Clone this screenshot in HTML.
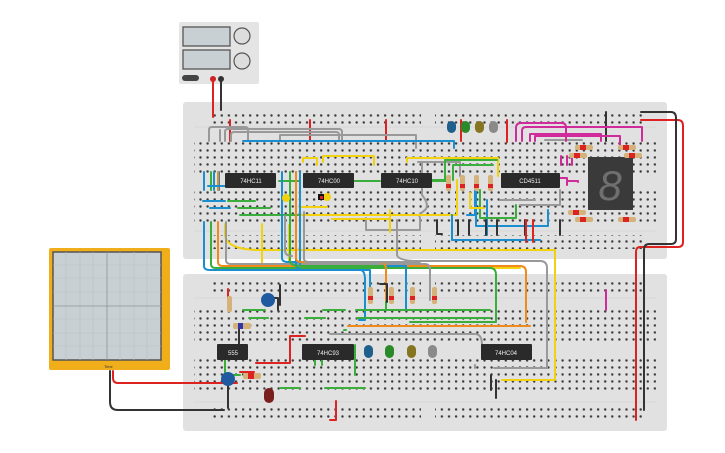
<!DOCTYPE html>
<html><head><meta charset="utf-8"><style>
html,body{margin:0;padding:0;background:#fff;width:725px;height:453px;overflow:hidden}
svg{display:block}
text{font-family:"Liberation Sans",sans-serif}
</style></head><body>
<svg width="725" height="453" viewBox="0 0 725 453" xmlns="http://www.w3.org/2000/svg">
<defs>
<pattern id="d" x="197" y="0" width="7.1" height="7" patternUnits="userSpaceOnUse"><circle cx="3.5" cy="3.5" r="1.2" fill="#3a3a3a"/></pattern>
</defs>
<rect x="179" y="22" width="80" height="62" rx="2" fill="#e4e4e4"/>
<rect x="183" y="27" width="47" height="19" fill="#c9d0d3" stroke="#555" stroke-width="1.3"/>
<rect x="183" y="50" width="47" height="19" fill="#c9d0d3" stroke="#555" stroke-width="1.3"/>
<circle cx="242" cy="36" r="8" fill="#ddd" stroke="#555" stroke-width="1.2"/>
<circle cx="242" cy="61" r="8" fill="#ddd" stroke="#555" stroke-width="1.2"/>
<rect x="182" y="75" width="17" height="6" rx="3" fill="#444"/>
<circle cx="213" cy="79" r="3" fill="#c22"/><circle cx="221" cy="79" r="3" fill="#333"/>
<rect x="49" y="248" width="121" height="122" rx="2" fill="#f0ae1a"/>
<rect x="53" y="252" width="108" height="108" fill="#c9d0d3" stroke="#555" stroke-width="1.5"/>
<g stroke="#b7bfc3" stroke-width="0.6">
<path d="M53 265H161M53 278H161M53 292H161M53 319H161M53 333H161M53 346H161M66 252V360M80 252V360M93 252V360M120 252V360M134 252V360M147 252V360"/>
</g>
<path d="M53 306H161M107 252V360" stroke="#8d9598" stroke-width="0.8"/>
<text x="104" y="368" font-size="4" fill="#333">Time</text>
<rect x="183" y="102" width="484" height="157" rx="3" fill="#e1e1e1"/>
<rect x="183" y="274" width="484" height="157" rx="3" fill="#e1e1e1"/>
<g fill="url(#d)">
<rect x="211" y="110" width="210" height="14"/><rect x="435" y="110" width="210" height="14"/>
<rect x="194" y="138" width="462" height="35"/><rect x="194" y="187" width="462" height="35"/>
<rect x="211" y="235" width="210" height="14"/><rect x="435" y="235" width="210" height="14"/>
<rect x="211" y="281" width="210" height="14"/><rect x="435" y="281" width="210" height="14"/>
<rect x="194" y="309" width="462" height="35"/><rect x="194" y="358" width="462" height="35"/>
<rect x="211" y="406" width="210" height="14"/><rect x="435" y="406" width="210" height="14"/>
</g>
<g stroke="#cfcfcf" stroke-width="0.6"><path d="M194 127H656M194 231H656M194 298H656M194 402H656"/></g>
<g fill="none" stroke-linecap="round" stroke-linejoin="round" stroke-width="2">
<path d="M213 79V117" stroke="#d22" />
<path d="M221 79V110" stroke="#333"/>
<path d="M230 120V141M310 120V141M386 120V141M461 120V141M507 120V142" stroke="#d22"/>
<path d="M606 112V141" stroke="#333"/>
<path d="M641 120H678Q683 120 683 126V242Q683 247 678 247H640Q636 247 636 252V420" stroke="#d22"/>
<path d="M641 112H671Q676 112 676 118V239Q676 244 671 244H649Q644 244 644 250V410" stroke="#333" />
<path d="M209 141V130Q209 127 212 127H245Q248 127 248 130V141M220 141V130M225 141V132Q225 129 228 129H339Q342 129 342 132V141M231 141V135Q231 132 234 132H336Q339 132 339 135V141M280 141V135H416V148M366 218V230H420V218M418 162H460V176M422 162V195Q430 205 425 210Q418 215 420 218" stroke="#999"/>
<path d="M243 141H454V148" stroke="#1a8fd0"/>
<path d="M303 162V158H317V165M323 162V156H374V165M407 162V158H498V176M290 211V215H457V180M225 224V236Q228 250 260 250H555V380H502M300 207H327M332 219H390V210M390 212V232" stroke="#f2d10e"/>
<path d="M262 224V268H520" stroke="#f2d10e"/>
<path d="M289 225V262Q290 268 300 268" stroke="#f2d10e"/>
<path d="M453 180V165H493M432 180H445V160H497" stroke="#3aae3a"/>
<path d="M204 172V190M214 172V190M219 172V190" stroke="#1a8fd0"/>
<path d="M211 172V190" stroke="#3aae3a"/>
<path d="M218 172V190" stroke="#f08a1b"/>
<path d="M203 201H225M210 208H230M208 186H227" stroke="#1a8fd0"/>
<path d="M228 201H255M238 208H270M240 215H300" stroke="#3aae3a"/>
<path d="M279 181H300M352 181H380M432 181H448" stroke="#3aae3a"/>
<path d="M204 222V266Q204 270 210 270H360Q365 270 365 280V320H359" stroke="#1a8fd0"/>
<path d="M211 222V264Q211 268 216 268H490Q496 268 496 275V322H410" stroke="#3aae3a"/>
<path d="M218 222V262Q218 266 223 266H520Q526 266 526 272V322" stroke="#f08a1b"/>
<path d="M226 222V260Q226 264 231 264H425Q430 264 430 270V300" stroke="#999"/>
<path d="M282 172V258Q282 262 288 262H340M296 172V264Q296 270 305 270H370V300M300 172V266H406V310" stroke="#1a8fd0"/>
<path d="M290 172V260Q290 266 300 266H386V310" stroke="#3aae3a"/>
<path d="M296 172V258Q296 262 302 262H380Q386 262 386 270V300" stroke="#f08a1b"/>
<path d="M304 212V259Q304 262 310 262H420M285 216V250Q285 256 292 256" stroke="#999"/>
<path d="M397 220V255Q398 261 420 261H540Q547 261 547 268V368H494" stroke="#999"/>
<path d="M452 215V240H540M475 185V215H467M487 200V235M476 192V226H548V210" stroke="#1a8fd0"/>
<path d="M480 190V218H516V205" stroke="#3aae3a"/>
<path d="M470 193V208H484" stroke="#f2d10e"/>
<path d="M545 140H582M500 200H535M560 190V205H520" stroke="#999"/>
<path d="M516 141V128Q516 123 521 123H562Q566 123 566 128V141M522 141V131Q522 127 526 127H642V141M530 141V134H601V141M535 141V136H620V148M560 178H567V185M567 181H578V182M625 181H632V199M561 156V165M567 156V165M572 156V165" stroke="#d02b9a"/>
<path d="M437 220V234H442M469 220V235M486 220V235M497 220V235M458 220V235M525 220V235M560 220V235" stroke="#333"/>
<path d="M526 220V242M533 220V242" stroke="#d22"/>
<path d="M228 289V304" stroke="#d22"/>
<path d="M606 290V310" stroke="#d02b9a"/>
<path d="M491 375V390M496 380V398" stroke="#333"/>
<path d="M280 285V305M239 356V325M228 375V408M380 284H387V302" stroke="#333"/>
<path d="M265 298H278V310" stroke="#333"/>
<path d="M243 310H265M249 318H268M305 318H325M323 310H345M356 310H490M357 318H490M344 330H346M240 346Q225 346 225 360V375H240M315 345V365M322 345V365M280 388H300M325 388H365M355 345V375" stroke="#3aae3a"/>
<path d="M348 326H530" stroke="#f08a1b"/>
<path d="M330 334H475Q482 334 482 345M475 368V365" stroke="#999"/>
<path d="M256 363H290V336H305M240 372H254" stroke="#d22"/>
<path d="M336 401V420H330" stroke="#d22"/>
<path d="M110 371V402Q110 410 118 410H224" stroke="#333"/>
<path d="M113 371V378Q113 383 118 383H237" stroke="#d22"/>
</g>
<g fill="#2a2a2a">
<rect x="225" y="173" width="51" height="15" rx="1"/><rect x="303" y="173" width="51" height="15" rx="1"/>
<rect x="381" y="173" width="51" height="15" rx="1"/><rect x="501" y="173" width="59" height="15" rx="1"/>
<rect x="217" y="344" width="31" height="16" rx="1"/><rect x="302" y="344" width="52" height="16" rx="1"/>
<rect x="481" y="344" width="51" height="16" rx="1"/>
</g>
<g fill="#eee" font-size="6" text-anchor="middle">
<text x="251" y="183">74HC11</text><text x="329" y="183">74HC00</text><text x="407" y="183">74HC10</text><text x="530" y="183">CD4511</text>
<text x="233" y="355">555</text><text x="328" y="355">74HC93</text><text x="506" y="355">74HC04</text>
</g>
<rect x="588" y="157" width="45" height="53" fill="#3a3a3a"/>
<text x="610" y="200" font-size="42" fill="#6f6f6f" text-anchor="middle" font-style="italic">8</text>
<g><rect x="447" y="121" width="9" height="12" rx="4.5" fill="#1f5f8c"/><rect x="461" y="121" width="9" height="12" rx="4.5" fill="#2a8a2a"/><rect x="475" y="121" width="9" height="12" rx="4.5" fill="#857420"/><rect x="489" y="121" width="9" height="12" rx="4.5" fill="#8a8a8a"/></g>
<g><rect x="364" y="345" width="9" height="13" rx="4.5" fill="#1f5f8c"/><rect x="385" y="345" width="9" height="13" rx="4.5" fill="#2a8a2a"/><rect x="407" y="345" width="9" height="13" rx="4.5" fill="#857420"/><rect x="428" y="345" width="9" height="13" rx="4.5" fill="#8a8a8a"/></g>
<rect x="264" y="388" width="10" height="15" rx="5" fill="#7a1e1e"/>
<circle cx="268" cy="300" r="7" fill="#1f5aa0"/><circle cx="228" cy="379" r="7" fill="#1f5aa0"/>
<g fill="#d4b27a">
<rect x="446" y="175" width="5" height="16" rx="2"/><rect x="460" y="175" width="5" height="16" rx="2"/><rect x="474" y="175" width="5" height="16" rx="2"/><rect x="488" y="175" width="5" height="16" rx="2"/>
<rect x="368" y="287" width="5" height="17" rx="2"/><rect x="389" y="287" width="5" height="17" rx="2"/><rect x="410" y="287" width="5" height="17" rx="2"/><rect x="432" y="287" width="5" height="17" rx="2"/>
<rect x="227" y="296" width="5" height="16" rx="2"/>
<rect x="233" y="323" width="18" height="6" rx="2"/><rect x="243" y="373" width="18" height="6" rx="2"/>
<rect x="575" y="145" width="18" height="5" rx="2"/><rect x="569" y="153" width="18" height="5" rx="2"/><rect x="618" y="145" width="18" height="5" rx="2"/><rect x="624" y="153" width="18" height="5" rx="2"/>
<rect x="568" y="210" width="18" height="5" rx="2"/><rect x="575" y="217" width="18" height="5" rx="2"/><rect x="618" y="217" width="18" height="5" rx="2"/>
</g>
<g fill="#d22"><rect x="446" y="184" width="5" height="4"/><rect x="460" y="184" width="5" height="4"/><rect x="474" y="184" width="5" height="4"/><rect x="488" y="184" width="5" height="4"/>
<rect x="368" y="296" width="5" height="4"/><rect x="389" y="296" width="5" height="4"/><rect x="410" y="296" width="5" height="4"/><rect x="432" y="296" width="5" height="4"/>
<rect x="580" y="145" width="6" height="5"/><rect x="574" y="153" width="6" height="5"/><rect x="623" y="145" width="6" height="5"/><rect x="629" y="153" width="6" height="5"/><rect x="573" y="210" width="6" height="5"/><rect x="580" y="217" width="6" height="5"/><rect x="623" y="217" width="6" height="5"/><rect x="248" y="373" width="6" height="6"/></g>
<rect x="238" y="323" width="5" height="6" fill="#33a"/>
<circle cx="286" cy="198" r="4" fill="#f2d10e"/><circle cx="327" cy="197" r="4" fill="#f2d10e"/>
<rect x="318" y="194" width="6" height="6" fill="#111"/><rect x="320" y="196" width="3" height="3" fill="#d22"/>
</svg>
</body></html>
